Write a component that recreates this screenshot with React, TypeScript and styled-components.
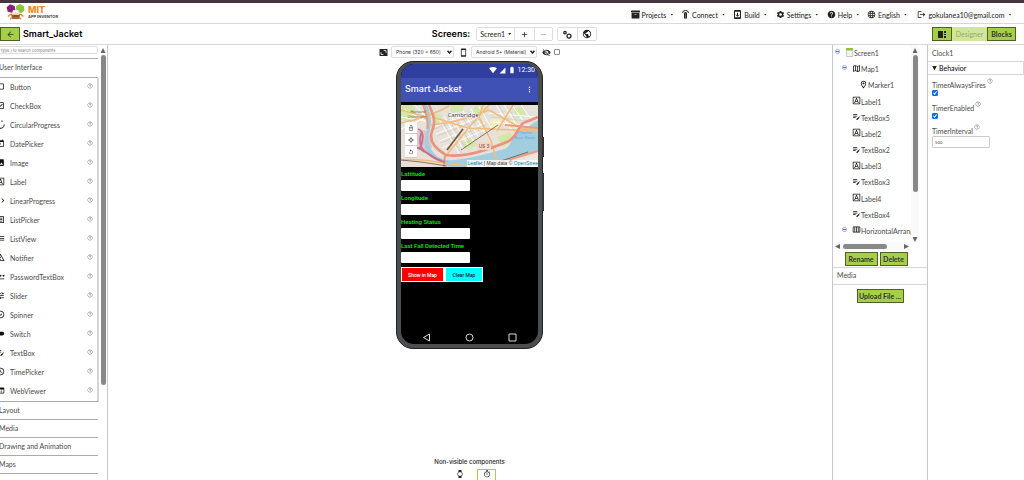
import React from "react";
import styled, { createGlobalStyle } from "styled-components";
import type { IconType } from "react-icons";
import {
  MdArrowBack, MdOutlineCheckBox, MdToday, MdImage, MdOutlineFontDownload, MdCode, MdListAlt,
  MdDehaze, MdOutlineWarningAmber, MdPassword, MdTune, MdOutlineExpandCircleDown, MdToggleOff,
  MdEditNote, MdSchedule, MdWeb, MdSettings, MdHelp, MdLanguage, MdLogout, MdPublic,
  MdVisibilityOff, MdSmartphone, MdHelpOutline, MdOutlineMap, MdOutlineLocationOn,
  MdOutlineCalendarViewWeek, MdMoreVert, MdSignalWifi4Bar,
  MdSignalCellular4Bar, MdBatteryFull, MdOutlineTimer, MdOutlineCrop54, MdOutlineLockOpen,
  MdOutlineOpenWith, MdReplay, MdAdd, MdRemove, MdWatch,
} from "react-icons/md";
import { FaArchive } from "react-icons/fa";

const lime = "#a5cf47";
const line = "#d8d8d8";

const GlobalStyle = createGlobalStyle`
  *, *::before, *::after { box-sizing: border-box; }
  body {
    margin: 0;
    overflow: hidden;
    background: #fff;
    color: #4a4a4a;
    font: 7px/10px Lato, "Open Sans", sans-serif;
  }
  button, input, select { font: inherit; color: inherit; margin: 0; }
  button { padding: 0; cursor: pointer; white-space: nowrap; }
  svg { display: block; flex: none; }
  h1, h2, h3, ul, p { margin: 0; padding: 0; font: inherit; }
  ul { list-style: none; }
`;

const Page = styled.div`
  min-height: 100vh;
  display: flex;
  flex-direction: column;
  border-top: 3px solid #46343f;
`;

const Header = styled.header`
  height: 21px;
  display: flex;
  align-items: center;
  justify-content: space-between;
  padding: 0 9px 0 6px;
  border-bottom: 1px solid ${line};
`;

const Brand = styled.a`
  display: flex;
  align-items: center;
  gap: 3px;
  padding-bottom: 2px;
  color: #444;
  text-decoration: none;
`;

const BrandName = styled.span`
  display: flex;
  flex-direction: column;
  font: 700 4px/5px Inter, sans-serif;
  strong {
    color: #f78a1d;
    font-size: 9px;
    line-height: 8px;
    font-weight: 800;
  }
`;

const Menu = styled.nav`
  display: grid;
  grid-template-columns: 44px 46px 36px 46px 34px 42px 101px;
  gap: 6px;
  padding-top: 3px;
`;

const MenuButton = styled.button`
  height: 13px;
  display: flex;
  align-items: center;
  justify-content: center;
  gap: 2px;
  border: 0;
  background: #fafafa;
  color: #222;
`;

const Caret = styled.span`
  width: 3px;
  height: 2px;
  margin-left: 2px;
  background: #222;
  clip-path: polygon(0 0, 100% 0, 50% 100%);
`;

const ProjectBar = styled.div`
  height: 21px;
  display: grid;
  grid-template-columns: 1fr auto 1fr;
  align-items: center;
  padding-right: 8px;
  border-bottom: 1px solid ${line};
`;

const ProjectTitle = styled.div`
  display: flex;
  align-items: center;
  gap: 3px;
  color: #000;
  h1 { font: 600 9px/12px Inter, sans-serif; }
`;

const LimeButton = styled.button<{ $w: number; $off?: boolean }>`
  width: ${(p) => p.$w}px;
  height: 14px;
  display: flex;
  align-items: center;
  justify-content: center;
  border: 1px solid ${(p) => (p.$off ? "#cfe69b" : "#4e5f2a")};
  background: ${(p) => (p.$off ? "#d0e69e" : lime)};
  color: ${(p) => (p.$off ? "#96a86b" : "#333")};
  font-weight: ${(p) => (p.$off ? 400 : 700)};
`;

const ScreenTools = styled.div`
  display: flex;
  align-items: center;
  margin-left: 13px;
  h2 {
    margin-right: 6px;
    color: #000;
    font: 600 9px/12px Inter, sans-serif;
  }
`;

const ToolGroup = styled.div`
  display: flex;
  height: 14px;
  margin-right: 4px;
  border: 1px solid #ddd;
  border-radius: 2px;
  &:last-child { margin-right: 0; }
`;

const Tool = styled.button<{ $w: number; $dim?: boolean }>`
  width: ${(p) => p.$w}px;
  display: flex;
  align-items: center;
  justify-content: center;
  gap: 1px;
  border: 0;
  background: #fff;
  color: ${(p) => (p.$dim ? "#aaa" : "#222")};
  & + & { border-left: 1px solid #ddd; }
`;

const ViewSwitch = styled.div`
  display: flex;
  justify-content: flex-end;
`;

const Workspace = styled.main`
  flex: 1;
  display: grid;
  grid-template-columns: 108px 1fr 96px 96px;
`;

const Palette = styled.aside`
  display: flex;
  justify-content: space-between;
  border-right: 1px solid #c8c8c8;
  overflow: hidden;
`;

const PaletteBody = styled.div`
  width: 103px;
  margin-left: -4px;
  padding-top: 1px;
  flex: none;
`;

const Search = styled.input`
  display: block;
  width: 102px;
  height: 8px;
  padding: 0 3px;
  border: 1px solid #ddd;
  border-radius: 2px;
  font: 4px/6px Inter, sans-serif;
  outline: 0;
  &::placeholder { color: #777; }
`;

const Section = styled.h2<{ $first?: boolean }>`
  height: ${(p) => (p.$first ? 20 : 18)}px;
  margin-top: ${(p) => (p.$first ? 4 : 0)}px;
  margin-right: 1px;
  padding-left: 3px;
  line-height: 16px;
  border-top: ${(p) => (p.$first ? "1px solid #aaa" : "0")};
  border-bottom: 1px solid #aaa;
`;

const ItemList = styled.ul`
  border-right: 2px solid #d4d4d4;
  border-bottom: 1px solid #aaa;
`;

const Item = styled.li`
  height: 19px;
  display: flex;
  align-items: center;
  gap: 5px;
  padding: 0 4px 2px 0;
  > svg:first-child { color: #111; }
  > svg:last-child {
    margin: 0 0 2px auto;
    color: #888;
  }
`;

const ScrollColumn = styled.div<{ $track?: string }>`
  width: 8px;
  display: flex;
  flex-direction: column;
  align-items: center;
  gap: 2px;
  padding-top: 3px;
  background: ${(p) => p.$track || "#fff"};
  > :nth-child(3) { margin-top: auto; }
`;

const Arrow = styled.span<{ $dir: "up" | "down" | "left" | "right" }>`
  width: 5px;
  height: 5px;
  background: #666;
  clip-path: polygon(
    ${(p) =>
      ({
        up: "50% 0, 100% 100%, 0 100%",
        down: "0 0, 100% 0, 50% 100%",
        left: "0 50%, 100% 0, 100% 100%",
        right: "0 0, 100% 50%, 0 100%",
      })[p.$dir]}
  );
`;

const Thumb = styled.span<{ $w: number; $h: number }>`
  width: ${(p) => p.$w}px;
  height: ${(p) => p.$h}px;
  border-radius: 3px;
  background: #888;
`;

const Viewer = styled.section`
  display: flex;
  flex-direction: column;
  align-items: center;
  padding-right: 1px;
`;

const DeviceBar = styled.div`
  height: 16px;
  display: flex;
  align-items: center;
  gap: 3px;
  padding-bottom: 2px;
  color: #222;
`;

const Picker = styled.label<{ $w: number }>`
  position: relative;
  width: ${(p) => p.$w}px;
  margin-right: 2px;
  select {
    display: block;
    width: 100%;
    height: 12px;
    padding: 0 4px;
    appearance: none;
    border: 1px solid #ddd;
    border-radius: 2px;
    background: #fff;
    color: #333;
    font: 5px/10px Inter, sans-serif;
  }
  svg {
    position: absolute;
    right: 2px;
    top: 4px;
    pointer-events: none;
  }
`;

const Tick = styled.input`
  width: 6px;
  height: 6px;
  display: block;
  appearance: none;
  border: 1px solid #888;
  border-radius: 1px;
  background: #fff;
  &:checked {
    border-color: #0b6fe8;
    background: #0b6fe8;
  }
  &:checked::before {
    content: "";
    display: block;
    width: 4px;
    height: 4px;
    background: #fff;
    clip-path: polygon(0 50%, 20% 35%, 40% 60%, 85% 0, 100% 20%, 40% 100%);
  }
`;

const Phone = styled.div`
  position: relative;
  width: 147px;
  height: 288px;
  padding: 2px 4px 4px;
  border: 2px solid #222;
  border-width: 1px;
  border-radius: 17px;
  background: #4b4d4e;
`;

const SideKey = styled.span<{ $top: number; $h: number }>`
  position: absolute;
  right: -2px;
  top: ${(p) => p.$top}px;
  width: 2px;
  height: ${(p) => p.$h}px;
  background: #333;
`;

const Screen = styled.div`
  height: 100%;
  display: flex;
  flex-direction: column;
  border-radius: 13px;
  overflow: hidden;
  background: #000;
  font-family: Roboto, sans-serif;
`;

const StatusBar = styled.div`
  height: 14px;
  display: flex;
  align-items: center;
  justify-content: flex-end;
  gap: 2px;
  padding: 0 3px 2px 0;
  background: #303f9f;
  color: #fff;
`;

const AppBar = styled.div`
  height: 24px;
  display: flex;
  align-items: center;
  justify-content: space-between;
  padding: 0 4px 2px;
  background: #3f51b5;
  color: #fff;
  font: 500 9px/12px Inter, sans-serif;
`;

const MapBox = styled.div`
  position: relative;
  height: 62px;
  margin-top: 3px;
  overflow: hidden;
  background: #f0ece2;
`;

const MapTools = styled.div`
  position: absolute;
  left: 4px;
  top: 17px;
  width: 12px;
  border-radius: 2px;
  background: #fff;
  color: #333;
  button {
    width: 12px;
    height: 12px;
    display: flex;
    align-items: center;
    justify-content: center;
    border: 0;
    border-bottom: 1px solid #ccc;
    background: none;
  }
`;

const Credit = styled.p`
  position: absolute;
  right: 0;
  bottom: 0;
  background: #ffffffcc;
  color: #333;
  font: 5px/7px "Liberation Sans", sans-serif;
  white-space: nowrap;
  a { color: #0078a8; text-decoration: none; }
`;

const Fields = styled.div`
  display: flex;
  flex-direction: column;
  padding-top: 2px;
`;

const Field = styled.label`
  height: 24px;
  color: #00f000;
  font: 500 6px/10px "Liberation Sans", sans-serif;
  font-family: Roboto, sans-serif;
  input {
    display: block;
    width: 69px;
    height: 11px;
    margin-top: 1px;
    border: 0;
    border-radius: 1px;
    background: #fff;
  }
`;

const Actions = styled.div`
  width: 82px;
  height: 15px;
  display: flex;
  justify-content: space-between;
  margin-top: 2px;
  padding: 1px;
  background: #fff;
`;

const AppButton = styled.button<{ $bg: string; $fg: string; $w: number }>`
  width: ${(p) => p.$w}px;
  border: 0;
  background: ${(p) => p.$bg};
  color: ${(p) => p.$fg};
  font: 500 5px/10px Roboto, sans-serif;
`;

const NavKeys = styled.div`
  margin-top: auto;
  height: 11px;
  display: flex;
  justify-content: space-between;
  padding: 0 21px;
`;

const NonVisible = styled.div`
  margin-top: 108px;
  display: flex;
  flex-direction: column;
  align-items: center;
  color: #222;
  font: 500 6px/10px Inter, sans-serif;
  ul {
    display: flex;
    gap: 8px;
    margin: 2px 0 0 7px;
  }
  li {
    width: 19px;
    height: 12px;
    display: flex;
    justify-content: center;
    border: 1px solid transparent;
  }
  li:last-child { border-color: ${lime}; }
`;

const Components = styled.aside`
  border-left: 1px solid #c8c8c8;
  border-right: 1px solid #c8c8c8;
`;

const TreeArea = styled.div`
  display: flex;
  height: 197px;
`;

const Tree = styled.ul`
  width: 78px;
  display: flex;
  flex-direction: column;
  justify-content: space-between;
  padding-bottom: 3px;
`;

const Node = styled.li<{ $depth: number }>`
  height: 16px;
  display: flex;
  align-items: center;
  padding-left: ${(p) => 2 + p.$depth * 7}px;
  white-space: nowrap;
  > svg { color: #111; margin-bottom: 2px; }
`;

const Fold = styled.span<{ $on: boolean }>`
  width: 5px;
  height: 5px;
  flex: none;
  display: flex;
  align-items: center;
  justify-content: center;
  margin: 0 5px 3px 0;
  border: ${(p) => (p.$on ? "1px solid #a9b6dd" : "0")};
  border-radius: 2px;
  &::before {
    content: "";
    width: 3px;
    height: 1px;
    background: ${(p) => (p.$on ? "#5468b0" : "transparent")};
  }
`;

const ScrollRow = styled.div`
  height: 9px;
  width: 78px;
  display: flex;
  align-items: center;
  gap: 3px;
  padding-left: 2px;
  background: #fafafa;
  span:last-child { margin-left: 14px; }
`;

const ButtonRow = styled.div`
  display: flex;
  justify-content: center;
  gap: 2px;
  padding: 1px 8px 1px 0;
`;

const MediaTitle = styled.h2`
  height: 18px;
  padding-left: 4px;
  line-height: 15px;
  border-top: 1px solid ${line};
  border-bottom: 1px solid ${line};
`;

const Upload = styled.div`
  display: flex;
  justify-content: center;
  padding-top: 4px;
`;

const Properties = styled.aside`
  h2 {
    height: 16px;
    padding-left: 4px;
    line-height: 17px;
  }
`;

const Group = styled.h3`
  height: 14px;
  display: flex;
  align-items: center;
  gap: 2px;
  padding-left: 4px;
  border: 1px solid ${line};
  border-left: 0;
  color: #000;
  > span { background: #222; }
`;

const Property = styled.label`
  height: 23px;
  display: block;
  padding-left: 4px;
  &:first-of-type { margin-top: 3px; }
`;

const PropertyName = styled.span`
  height: 12px;
  display: flex;
  gap: 1px;
  line-height: 14px;
  svg { color: #888; }
`;

const NumberBox = styled.input`
  display: block;
  width: 58px;
  height: 12px;
  padding: 0 2px;
  border: 1px solid #ccc;
  border-radius: 1px;
  font: 4px/10px Inter, sans-serif;
`;

const ButtonGlyph: IconType = (p) => <MdOutlineCrop54 {...p} />;
const Spin: IconType = ({ size }) => (
  <svg width={size} height={size} viewBox="0 0 24 24" fill="none" stroke="currentColor" strokeWidth="2.5">
    <path d="M5 19.500A10 10 0 0 0 22 12M14 3h4" />
  </svg>
);
const Antenna: IconType = ({ size }) => (
  <svg width={size} height={size} viewBox="0 0 18 18" fill="none" stroke="currentColor" strokeWidth="2">
    <path d="M3 6a6 5 0 0 1 12 0" />
    <path d="M6 7a3 3 0 0 1 6 0v10H6z" fill="currentColor" stroke="none" />
    <path d="M9 9v2M9 13v2" stroke="#fff" strokeWidth="1.500" />
  </svg>
);
const BuildGlyph: IconType = ({ size }) => (
  <svg width={size} height={size} viewBox="0 0 18 18" fill="none" stroke="currentColor" strokeWidth="2">
    <path d="M3 1h12v16H3zM3 2.500h12M3 15.500h12M9 5.500v7M6 9.500l3 3 3-3" />
  </svg>
);
const ResizeGlyph = () => (
  <svg width="9" height="7" viewBox="0 0 18 14">
    <rect x="1" y="0" width="16" height="14" rx="1" fill="#222" />
    <path d="M9 3h5v5M4 6v5h5" fill="none" stroke="#fff" strokeWidth="1.500" />
  </svg>
);
const PanelsGlyph = () => (
  <svg width="9" height="7" viewBox="0 0 9 7" fill="#222">
    <path d="M0 0h5v7H0zM6 0h2v2H6zM6 3h2v1H6zM6 5h2v2H6z" />
  </svg>
);

const palette: [string, IconType][] = [
  ["Button", ButtonGlyph],
  ["CheckBox", MdOutlineCheckBox],
  ["CircularProgress", Spin],
  ["DatePicker", MdToday],
  ["Image", MdImage],
  ["Label", MdOutlineFontDownload],
  ["LinearProgress", MdCode],
  ["ListPicker", MdListAlt],
  ["ListView", MdDehaze],
  ["Notifier", MdOutlineWarningAmber],
  ["PasswordTextBox", MdPassword],
  ["Slider", MdTune],
  ["Spinner", MdOutlineExpandCircleDown],
  ["Switch", MdToggleOff],
  ["TextBox", MdEditNote],
  ["TimePicker", MdSchedule],
  ["WebViewer", MdWeb],
];

const menu: [string, IconType][] = [
  ["Projects", FaArchive],
  ["Connect", Antenna],
  ["Build", BuildGlyph],
  ["Settings", MdSettings],
  ["Help", MdHelp],
  ["English", MdLanguage],
  ["gokulanea10@gmail.com", MdLogout],
];

const ScreenGlyph: IconType = ({ size }) => (
  <svg width={size} height={size} viewBox="0 0 9 9">
    <path d="M1 0h7v9H1z" fill="#c9c9c9" />
    <path d="M2 3h5v5H2z" fill="#f4f4f4" />
    <path d="M1 0h7v2H1z" fill="#8fc32f" />
  </svg>
);

const tree: [string, IconType, number, boolean][] = [
  ["Screen1", ScreenGlyph, 0, true],
  ["Map1", MdOutlineMap, 1, true],
  ["Marker1", MdOutlineLocationOn, 2, false],
  ["Label1", MdOutlineFontDownload, 1, false],
  ["TextBox5", MdEditNote, 1, false],
  ["Label2", MdOutlineFontDownload, 1, false],
  ["TextBox2", MdEditNote, 1, false],
  ["Label3", MdOutlineFontDownload, 1, false],
  ["TextBox3", MdEditNote, 1, false],
  ["Label4", MdOutlineFontDownload, 1, false],
  ["TextBox4", MdEditNote, 1, false],
  ["HorizontalArrang", MdOutlineCalendarViewWeek, 1, true],
];

const Logo = () => (
  <svg width="19" height="16" viewBox="0 0 57 48">
    <path d="M2 10 12 1l14 5 2 12-10 8-13-3z" fill="#8a1f7c" />
    <path d="M30 6 42 0l12 7 1 13-10 8-14-6z" fill="#8cc63f" />
    <path d="M6 38c4-6 8-8 12-7M52 38c-4-6-8-8-12-7M12 46l6-5M46 46l-6-5" fill="none" stroke="#f58a2c" strokeWidth="4" />
    <path d="M15 31h28l-3 14H18z" fill="#b5653a" />
    <path d="M18 32c0-14 22-14 22 0z" fill="#f2dccb" />
    <circle cx="24" cy="22" r="4" fill="#fff" />
    <circle cx="34" cy="22" r="4" fill="#fff" />
    <path d="M19 36h20" stroke="#7b3e22" strokeWidth="3" />
  </svg>
);

const Chevron = () => (
  <svg width="5" height="4" viewBox="0 0 10 8" fill="none" stroke="#222" strokeWidth="3">
    <path d="M1 1.500 5 6l4-4.500" />
  </svg>
);

const CityMap = () => (
  <svg width="100%" height="62" viewBox="0 0 137 62" preserveAspectRatio="xMidYMid slice" fill="none">
    <path d="M0 0h137v62H0z" fill="#e6e1d9" />
    <path d="M0 0h12l4 10-9 8-7-3zM50 0h14l-3 6-11 2zM74 1l12 3-4 7-10-3zM96 32l12-5 6 8-12 7zM60 38l9-5 8 6-10 6zM112 3h12v8l-9 2zM33 8l8 2-2 9-7-1z" fill="#d3e8a8" />
    <path d="M16 26l12-1 3 18-9 5-7-9z" fill="#dcc4cb" />
    <path d="M88 15l10-2 3 8-9 4zM106 14l12 4-4 7-10-4z" fill="#f3edbf" />
    <g stroke="#fff" strokeWidth="1">
      <path d="M38 14l20 34M43 11l19 33M49 9l18 31M55 8l17 28M62 6l15 25M70 4l14 24M78 2l13 22M32 22l40-14M35 29l44-17M38 36l46-18M41 43l45-19" />
      <path d="M95 0l16 26M103 0l15 24M111 0l14 20M120 0l12 17M88 8l48 4M92 17l42 4M4 5l22 12M0 24l25-12M14 0l13 14M0 12l24 4" />
    </g>
    <g stroke="#bdb8ae" strokeWidth=".4">
      <path d="M40 14l20 34M46 11l19 33M52 9l18 31M59 8l17 28M66 6l15 25M33 24l40-14M36 31l44-17M39 38l46-18M98 1l16 26M106 1l15 24M90 12l44 5" />
    </g>
    <path d="M26 0c4 8 5 17 3 25-3 8-3 14 3 22 5 7 13 9 22 8 18-2 34-7 50-11 7-4 8-14 15-19 5-3 11-4 18-10v32c-20 4-39 10-61 15H45C34 57 26 51 24 42c-1-9 3-12 2-22-1-8-3-12-3-20z" fill="#a0cede" />
    <path d="M0 52c12-2 25-5 38 2l10 8H0z" fill="#eadfd5" />
    <path d="M88 62c17-3 32-8 49-13v13z" fill="#eee7dd" />
    <g stroke="#f4bb7c" strokeWidth="1.600">
      <path d="M0 18C20 14 34 9 48 1M30 20c18-2 35-5 58-15M31 12l36 11 70 3M44 52L70 20 88 0M82 0l-4 12 12 24 6 21M88 5l32 18 17 2M0 5l29 8M96 26l16-26" />
      <path d="M0 55c16-2 27 1 44 3l22 3" />
    </g>
    <path d="M28 0c5 11 7 17 3 26-4 12 6 19 14 24 17 3 42-5 63-14 8-5 8-12 14-18l15-6" stroke="#ea9180" strokeWidth="2.600" />
    <path d="M22 0c4 9 6 16 4 24M44 50l-1 12M104 20l33 3M84 62l53-16" stroke="#ec9b83" strokeWidth="2" />
    <path d="M17 24c7 2 5 13 2 19M21 26c-3 8-4 16 5 22 6 5 12 8 18 9M14 42c9 2 17 11 27 14" stroke="#cb6e8e" strokeWidth="1.800" />
    <path d="M97 20L60 45M0 55l20 2 26 4M100 56l27-9" stroke="#6e5648" strokeWidth=".8" />
    <path d="M46 45L62 24" stroke="#7a5a41" strokeWidth="1.800" />
    <rect x="76" y="37" width="14" height="8" rx="1" fill="#f7d3c4" />
    <g fill="#333" fontFamily="Noto Sans, sans-serif" textAnchor="middle">
      <text x="62" y="12" fontSize="6" stroke="#fff" strokeWidth="1" paintOrder="stroke">Cambridge</text>
      <text x="83" y="43" fontSize="5" fill="#643">US 3</text>
      <g fontSize="4" fill="#6b5c48">
        <text x="17" y="8">Harvard</text>
        <text x="16" y="13">University</text>
      </g>
      <g fontSize="4" fill="#7f9cc4">
        <text x="124" y="29">Charles</text>
        <text x="124" y="34">River Basin</text>
      </g>
    </g>
  </svg>
);

const fields = ["Lattitude", "Longitude", "Heating Status", "Last Fall Detected Time"];

export default function App() {
  return (
    <Page>
      <GlobalStyle />
      <Header>
        <Brand href="#">
          <Logo />
          <BrandName>
            <strong>MIT</strong>APP INVENTOR
          </BrandName>
        </Brand>
        <Menu>
          {menu.map(([name, Icon]) => (
            <MenuButton key={name}>
              <Icon size={9} />
              {name}
              <Caret />
            </MenuButton>
          ))}
        </Menu>
      </Header>

      <ProjectBar>
        <ProjectTitle>
          <LimeButton $w={20} aria-label="Back"><MdArrowBack size={9} /></LimeButton>
          <h1>Smart_Jacket</h1>
        </ProjectTitle>
        <ScreenTools>
          <h2>Screens:</h2>
          <ToolGroup>
            <Tool $w={37}>Screen1<Caret /></Tool>
            <Tool $w={20} aria-label="Add screen"><MdAdd size={9} /></Tool>
            <Tool $w={18} $dim aria-label="Remove screen"><MdRemove size={9} /></Tool>
          </ToolGroup>
          <ToolGroup>
            <Tool $w={19} aria-label="Project properties">
              <svg width="9" height="9" viewBox="0 0 18 18" fill="none" stroke="#222" strokeWidth="2.500">
                <circle cx="4" cy="5" r="2.500" />
                <circle cx="12" cy="12" r="4" />
              </svg>
            </Tool>
            <Tool $w={19} aria-label="Publish"><MdPublic size={10} /></Tool>
          </ToolGroup>
        </ScreenTools>
        <ViewSwitch>
          <LimeButton $w={20} aria-label="Toggle panels"><PanelsGlyph /></LimeButton>
          <LimeButton $w={35} $off>Designer</LimeButton>
          <LimeButton $w={29}>Blocks</LimeButton>
        </ViewSwitch>
      </ProjectBar>

      <Workspace>
        <Palette>
          <PaletteBody>
            <Search placeholder="Type / to search components" aria-label="Search components" />
            <Section $first>User Interface</Section>
            <ItemList>
              {palette.map(([name, Icon]) => (
                <Item key={name}>
                  <Icon size={9} />
                  {name}
                  <MdHelpOutline size={6} />
                </Item>
              ))}
            </ItemList>
            {["Layout", "Media", "Drawing and Animation", "Maps"].map((name) => (
              <Section key={name}>{name}</Section>
            ))}
          </PaletteBody>
          <ScrollColumn>
            <Arrow $dir="up" />
            <Thumb $w={5} $h={330} />
          </ScrollColumn>
        </Palette>

        <Viewer>
          <DeviceBar>
            <ResizeGlyph />
            <Picker $w={63}>
              <select aria-label="Screen size"><option>Phone (320 x 650)</option></select>
              <Chevron />
            </Picker>
            <MdSmartphone size={9} />
            <Picker $w={66}>
              <select aria-label="Theme"><option>Android 5+ (Material)</option></select>
              <Chevron />
            </Picker>
            <MdVisibilityOff size={9} />
            <Tick type="checkbox" aria-label="Display hidden components" />
          </DeviceBar>
          <Phone>
            <SideKey $top={75} $h={20} />
            <SideKey $top={111} $h={38} />
            <Screen>
              <StatusBar>
                <MdSignalWifi4Bar size={8} />
                <MdSignalCellular4Bar size={7} />
                <MdBatteryFull size={8} />
                <span>12:30</span>
              </StatusBar>
              <AppBar>
                Smart Jacket
                <MdMoreVert size={9} />
              </AppBar>
              <MapBox>
                <CityMap />
                <MapTools>
                  <button aria-label="Unlock"><MdOutlineLockOpen size={6} /></button>
                  <button aria-label="Recenter"><MdOutlineOpenWith size={6} /></button>
                  <button aria-label="Reset"><MdReplay size={6} /></button>
                </MapTools>
                <Credit>
                  <a href="#">Leaflet</a> | Map data © <a href="#">OpenStree</a>
                </Credit>
              </MapBox>
              <Fields>
                {fields.map((name) => (
                  <Field key={name}>
                    {name}
                    <input />
                  </Field>
                ))}
              </Fields>
              <Actions>
                <AppButton $bg="#ff0000" $fg="#fff" $w={41}>Show in Map</AppButton>
                <AppButton $bg="#00ffff" $fg="#123" $w={36}>Clear Map</AppButton>
              </Actions>
              <NavKeys>
                {["M7.500 1v7L1.500 4.500z", "M1 4.500a3.500 3.500 0 1 0 7 0a3.500 3.500 0 1 0-7 0z", "M1 1h7v7H1z"].map((d) => (
                  <svg key={d} width="9" height="9" viewBox="0 0 9 9" fill="none" stroke="#ddd">
                    <path d={d} />
                  </svg>
                ))}
              </NavKeys>
            </Screen>
          </Phone>
          <NonVisible>
            Non-visible components
            <ul>
              <li><MdWatch size={8} /></li>
              <li><MdOutlineTimer size={8} /></li>
            </ul>
          </NonVisible>
        </Viewer>

        <Components>
          <TreeArea>
            <Tree>
              {tree.map(([name, Icon, depth, fold]) => (
                <Node key={name} $depth={depth}>
                  <Fold $on={fold} />
                  <Icon size={9} />
                  {name}
                </Node>
              ))}
            </Tree>
            <ScrollColumn $track="#fafafa">
              <Arrow $dir="up" />
              <Thumb $w={5} $h={137} />
              <Arrow $dir="down" />
            </ScrollColumn>
          </TreeArea>
          <ScrollRow>
            <Arrow $dir="left" />
            <Thumb $w={44} $h={5} />
            <Arrow $dir="right" />
          </ScrollRow>
          <ButtonRow>
            <LimeButton $w={33}>Rename</LimeButton>
            <LimeButton $w={28}>Delete</LimeButton>
          </ButtonRow>
          <MediaTitle>Media</MediaTitle>
          <Upload>
            <LimeButton $w={47}>Upload File ...</LimeButton>
          </Upload>
        </Components>

        <Properties>
          <h2>Clock1</h2>
          <Group><Arrow $dir="down" />Behavior</Group>
          <Property>
            <PropertyName>TimerAlwaysFires<MdHelpOutline size={6} /></PropertyName>
            <Tick type="checkbox" defaultChecked />
          </Property>
          <Property>
            <PropertyName>TimerEnabled<MdHelpOutline size={6} /></PropertyName>
            <Tick type="checkbox" defaultChecked />
          </Property>
          <Property>
            <PropertyName>TimerInterval<MdHelpOutline size={6} /></PropertyName>
            <NumberBox defaultValue="500" />
          </Property>
        </Properties>
      </Workspace>
    </Page>
  );
}
